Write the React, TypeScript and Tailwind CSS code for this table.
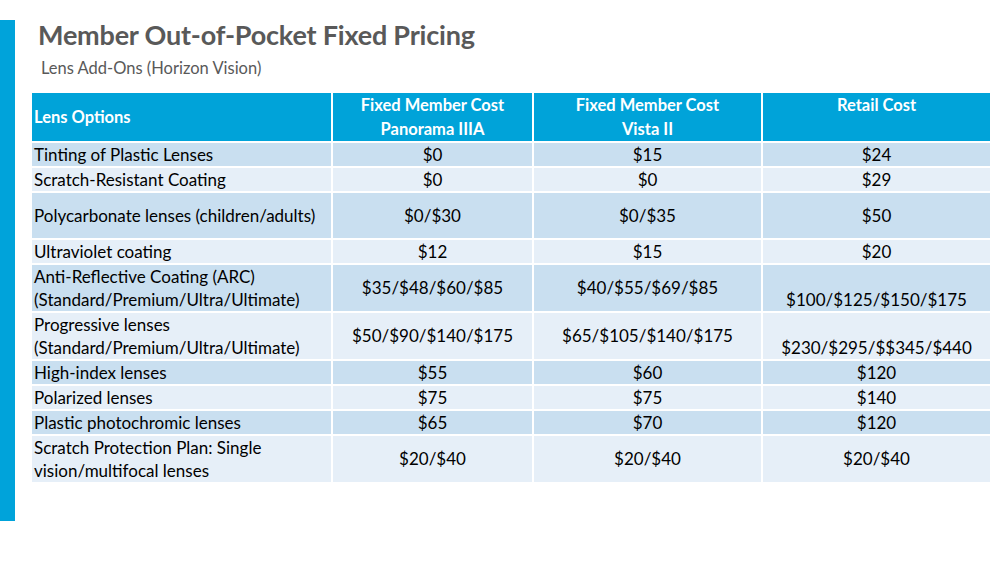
import React from "react";

type Row = {
  option: React.ReactNode;
  panorama: string;
  vista: string;
  retail: string;
  h: string;
  retailLow?: boolean;
};

const rows: Row[] = [
  { option: "Tinting of Plastic Lenses", panorama: "$0", vista: "$15", retail: "$24", h: "h-[24px]" },
  { option: "Scratch-Resistant Coating", panorama: "$0", vista: "$0", retail: "$29", h: "h-[25px]" },
  { option: "Polycarbonate lenses (children/adults)", panorama: "$0/$30", vista: "$0/$35", retail: "$50", h: "h-[47px]" },
  { option: "Ultraviolet coating", panorama: "$12", vista: "$15", retail: "$20", h: "h-[25px]" },
  {
    option: (
      <>
        Anti-Reflective Coating (ARC)
        <br />
        (Standard/Premium/Ultra/Ultimate)
      </>
    ),
    panorama: "$35/$48/$60/$85",
    vista: "$40/$55/$69/$85",
    retail: "$100/$125/$150/$175",
    h: "h-[47px]",
    retailLow: true,
  },
  {
    option: (
      <>
        Progressive lenses
        <br />
        (Standard/Premium/Ultra/Ultimate)
      </>
    ),
    panorama: "$50/$90/$140/$175",
    vista: "$65/$105/$140/$175",
    retail: "$230/$295/$$345/$440",
    h: "h-[48px]",
    retailLow: true,
  },
  { option: "High-index lenses", panorama: "$55", vista: "$60", retail: "$120", h: "h-[24px]" },
  { option: "Polarized lenses", panorama: "$75", vista: "$75", retail: "$140", h: "h-[24px]" },
  { option: "Plastic photochromic lenses", panorama: "$65", vista: "$70", retail: "$120", h: "h-[24px]" },
  {
    option: (
      <>
        Scratch Protection Plan: Single
        <br />
        vision/multifocal lenses
      </>
    ),
    panorama: "$20/$40",
    vista: "$20/$40",
    retail: "$20/$40",
    h: "h-[48px]",
  },
];

export default function App() {
  return (
    <div
      className="relative w-[1000px] h-[563px] bg-white overflow-hidden"
      style={{ fontFamily: "Lato, 'Open Sans', sans-serif" }}
    >
      <div className="flex h-full">
        <div className="mt-[20px] w-[15px] h-[501px] bg-[#00a3da] shrink-0" />
        <div className="flex-1 pl-[17px]">
          <h1 className="mt-[18px] ml-[6px] text-[27px] leading-[34px] font-bold text-[#595959] tracking-[-0.2px]">
            Member Out-of-Pocket Fixed Pricing
          </h1>
          <p className="ml-[9px] mt-[5px] text-[16.5px] leading-[22px] text-[#595959]">
            Lens Add-Ons (Horizon Vision)
          </p>
          <table className="mt-[14px] w-[958px] border-collapse text-[17px] text-black table-fixed">
            <colgroup>
              <col className="w-[300px]" />
              <col className="w-[201px]" />
              <col className="w-[229px]" />
              <col className="w-[228px]" />
            </colgroup>
            <thead>
              <tr className="bg-[#00a3d9] text-white text-[16.5px] h-[48px]">
                <th className="border-2 border-white border-t-0 border-l-0 text-left align-middle px-[2px] py-0 font-bold">
                  Lens Options
                </th>
                <th className="border-2 border-white border-t-0 align-top p-0 leading-[24px] font-bold">
                  Fixed Member Cost
                  <br />
                  Panorama IIIA
                </th>
                <th className="border-2 border-white border-t-0 align-top p-0 leading-[24px] font-bold">
                  Fixed Member Cost
                  <br />
                  Vista II
                </th>
                <th className="border-2 border-white border-t-0 border-r-0 align-top p-0 leading-[24px] font-bold">
                  Retail Cost
                </th>
              </tr>
            </thead>
            <tbody>
              {rows.map((r, i) => (
                <tr
                  key={i}
                  className={`${r.h} ${i % 2 === 0 ? "bg-[#c9dff0]" : "bg-[#e6eff8]"}`}
                >
                  <td className="border-2 border-white border-l-0 px-[2px] py-0 leading-[23px] align-middle">
                    {r.option}
                  </td>
                  <td className="border-2 border-white p-0 text-center align-middle leading-[22px]">
                    {r.panorama}
                  </td>
                  <td className="border-2 border-white p-0 text-center align-middle leading-[22px]">
                    {r.vista}
                  </td>
                  <td
                    className={`border-2 border-white border-r-0 p-0 text-center leading-[22px] ${
                      r.retailLow ? "align-bottom" : "align-middle"
                    }`}
                  >
                    {r.retail}
                  </td>
                </tr>
              ))}
            </tbody>
          </table>
        </div>
      </div>
    </div>
  );
}
